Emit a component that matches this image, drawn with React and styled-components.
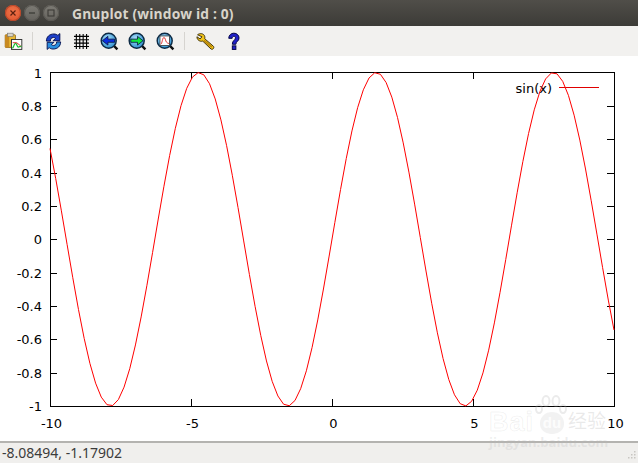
import React from "react";
import styled, { createGlobalStyle } from "styled-components";

const Global = createGlobalStyle`
  html, body { margin: 0; padding: 0; background: #fff; overflow: hidden; }
  #root { width: 638px; height: 463px; }
`;
const Win = styled.div`
  width: 638px; height: 463px; display: flex; flex-direction: column; position: relative; overflow: hidden;
  font-family: "Noto Sans", sans-serif;
`;
const TitleBar = styled.div`
  height: 26px; flex: none; display: flex; align-items: center; padding-left: 5px;
  background: linear-gradient(#504e49, #3c3b37);
`;
const WinBtn = styled.div`
  width: 16px; height: 16px; border-radius: 50%; margin-right: 3px; display: flex; align-items: center; justify-content: center;
  background: ${p => p.$close ? "radial-gradient(circle at 50% 40%, #f0744a, #d9502a)" : "linear-gradient(#7d7b75, #64625d)"};
  box-shadow: inset 0 0 0 1px ${p => p.$close ? "#b8472a" : "#5a5853"};
`;
const Title = styled.div`
  margin-left: 10px; color: #d8d4ca; font: bold 13.8px "Open Sans", sans-serif; letter-spacing: 0.15px; white-space: nowrap;
`;
const Toolbar = styled.div`
  height: 30px; flex: none; display: flex; align-items: center; padding-left: 2px; background: #f2f1ef;
`;
const ToolBtn = styled.div`
  width: 28px; height: 30px; flex: none; display: flex; align-items: center; justify-content: center;
  &:first-child { width: 22px; }
`;
const Sep = styled.div`
  width: 1px; height: 18px; background: #d6d4d0; margin: 0 ${p => p.$r || 6}px 0 ${p => p.$l || 8}px; flex: none;
`;
const PlotArea = styled.div`
  height: 385px; flex: none; background: #fff; position: relative;
`;
const PlotSvg = styled.svg`
  display: block; width: 638px; height: 385px;
`;
const Status = styled.div`
  flex: 1; background: #f0efed; border-top: 2px solid #b4b3b0; position: relative; padding: 1px 0 0 2px;
  color: #3c3c3c; font: 14px/18px "Noto Sans", sans-serif; box-sizing: border-box;
`;
const Grip = styled.svg`
  position: absolute; right: 2px; bottom: 2px; width: 11px; height: 11px;
`;
const Mark = styled.div`
  position: absolute; left: 486px; top: 395px; width: 150px; height: 60px; pointer-events: none;
`;
const MarkBai = styled.span`
  position: absolute; left: 3px; top: 17px; font: bold 27px/20px "Liberation Sans", sans-serif; letter-spacing: 1px;
  -webkit-text-stroke: 0.6px rgba(170,170,170,.22); color: rgba(255,255,255,.6);
`;
const MarkDu = styled.span`
  position: absolute; left: 54px; top: 17px; width: 24px; height: 22px; border-radius: 50% 50% 45% 45%;
  background: rgba(190,190,190,.2); text-align: center;
  font: bold 15px/22px "Liberation Sans", sans-serif; color: rgba(255,255,255,.85);
`;
const MarkCn = styled.span`
  position: absolute; left: 82px; top: 15px; font: 19px/20px "Noto Sans CJK SC", sans-serif; color: rgba(170,170,170,.25);
`;
const MarkUrl = styled.span`
  position: absolute; left: 3px; top: 41px; font: bold 13px/13px "Open Sans", sans-serif; color: rgba(185,185,185,.25); white-space: nowrap;
`;
const MarkPaw = styled.svg`
  position: absolute; left: 46px; top: 0; width: 36px; height: 22px;
`;

const L = 50, R = 614, T = 72.5, B = 406;
const px = x => L + (x + 10) / 20 * (R - L);
const py = y => (T + B) / 2 - y * (B - T) / 2;
const curve = Array.from({ length: 100 }, (_, i) => {
  const x = -10 + i * 20 / 99;
  return `${px(x).toFixed(2)},${py(Math.sin(x)).toFixed(2)}`;
}).join(" ");
const yt = ["1", "0.8", "0.6", "0.4", "0.2", "0", "-0.2", "-0.4", "-0.6", "-0.8", "-1"];
const xt = [-10, -5, 0, 5, 10];

const Icon = styled.svg`width: 19px; height: 19px; display: block;`;

const Lens = ({ children }) => (
  <Icon viewBox="0 0 24 24">
    <defs>
      <radialGradient id="lg" cx="40%" cy="35%" r="70%">
        <stop offset="0" stopColor="#a8dcf8" />
        <stop offset="1" stopColor="#2a8fd0" />
      </radialGradient>
    </defs>
    <path d="M17 17l5 5" stroke="#111" strokeWidth="3" />
    <circle cx="11" cy="11" r="9.500" fill="url(#lg)" stroke="#0d2a44" strokeWidth="1.800" />
    {children}
  </Icon>
);
const ArrowPath = ({ d, fill }) => <path d={d} fill={fill} stroke="#06103a" strokeWidth="1" />;

export default function App() {
  return (
    <Win>
      <Global />
      <TitleBar>
        <WinBtn $close>
          <svg width="8" height="8" viewBox="0 0 8 8"><path d="M1.5 1.5l5 5M6.5 1.5l-5 5" stroke="#5a2010" strokeWidth="1.2" /></svg>
        </WinBtn>
        <WinBtn>
          <svg width="8" height="8" viewBox="0 0 8 8"><path d="M1 4h6" stroke="#3c3b37" strokeWidth="1.3" /></svg>
        </WinBtn>
        <WinBtn>
          <svg width="8" height="8" viewBox="0 0 8 8"><rect x="1" y="1" width="6" height="6" fill="none" stroke="#3c3b37" strokeWidth="1.1" /></svg>
        </WinBtn>
        <Title>Gnuplot (window id : 0)</Title>
      </TitleBar>
      <Toolbar>
        <ToolBtn>
          <Icon viewBox="0 0 24 24">
            <rect x="1.500" y="3.500" width="13" height="16" rx="1" fill="#e8b834" stroke="#8a6414" />
            <rect x="1.500" y="3.500" width="5" height="16" fill="#c98a20" />
            <rect x="4.500" y="1.500" width="7" height="4" fill="#d9d5c8" stroke="#777" strokeWidth=".8" />
            <rect x="9.500" y="9.500" width="13" height="12.500" fill="#fff" stroke="#333" strokeWidth="1.200" />
            <path d="M10.500 20.500c2-1 2-6 4-6s2 4.500 3.500 4.500 2-1 4-1" fill="none" stroke="#18c030" strokeWidth="1.600" />
            <path d="M11 13.500h5l5 4" fill="none" stroke="#e03030" strokeWidth="1.200" />
          </Icon>
        </ToolBtn>
        <Sep />
        <ToolBtn>
          <Icon viewBox="0 0 24 24">
            <path d="M3 11.500C3 6 7 2.500 12.500 2.500c2.300 0 3.800.8 5 1.800L20 2v9h-8.500l3-3C13.500 7 12.500 6.800 11.500 7c-2.500.3-3.500 2.300-3.500 4.500z" fill="#1d3fc8" stroke="#041050" strokeWidth="1.200" />
            <path d="M21 12.500c0 5.500-4 9-9.500 9-2.300 0-3.800-.8-5-1.800L4 22v-9h8.500l-3 3c1 1 2 1.200 3 1 2.500-.3 3.500-2.300 3.500-4.500z" fill="#2a8fe0" stroke="#041050" strokeWidth="1.200" />
          </Icon>
        </ToolBtn>
        <ToolBtn>
          <Icon viewBox="0 0 24 24">
            <path d="M2.500 5.500h19M2.500 9.800h19M2.500 14.100h19M2.500 18.400h19M5.500 2.500v19M9.800 2.500v19M14.100 2.500v19M18.400 2.500v19" stroke="#000" strokeWidth="1.400" fill="none" />
          </Icon>
        </ToolBtn>
        <ToolBtn>
          <Lens><ArrowPath d="M3 11l7-5.500V9h8.500v4H10v3.500z" fill="#0a2ee0" /></Lens>
        </ToolBtn>
        <ToolBtn>
          <Lens><ArrowPath d="M19 11l-7-5.500V9H3.500v4H12v3.500z" fill="#10e840" /></Lens>
        </ToolBtn>
        <ToolBtn>
          <Lens>
            <rect x="5" y="5" width="12" height="12" fill="#fff" stroke="#333" strokeWidth="1" />
            <path d="M6 15.500c2-1 2-8.500 4-8.500s2 4.500 3 5.500 2 2 3.500 2" fill="none" stroke="#e02828" strokeWidth="1.200" />
          </Lens>
        </ToolBtn>
        <Sep $l={5} $r={6} />
        <ToolBtn>
          <Icon viewBox="0 0 24 24">
            <path d="M2 3.500C5 1 10 1.800 11 5.500c.4 1.300.2 2.300 0 3l11 9.500c1.500 1.500-.5 5-3 3.500L8.500 11.500C5 12.500 1 10 1.200 6l4 2.800L7.500 6z" fill="#f2c418" stroke="#3a2c06" strokeWidth="1.200" />
            <path d="M10 10.500l10 8.500" stroke="#b8860c" strokeWidth="2" />
          </Icon>
        </ToolBtn>
        <ToolBtn>
          <Icon viewBox="0 0 24 24">
            <path d="M6 8C6 4 9 1.500 12.500 1.500S19 4 19 7.500c0 4.200-4 4.300-4 8h-4.500c0-5 4-5.300 4-8 0-1.200-.8-2-2-2-1.400 0-2.200 1-2.200 2.500z" fill="#2020c8" stroke="#000040" strokeWidth="1.200" />
            <rect x="10.500" y="17.500" width="4.500" height="4.500" fill="#2020c8" stroke="#000040" strokeWidth="1.200" />
          </Icon>
        </ToolBtn>
      </Toolbar>
      <PlotArea>
        <PlotSvg viewBox="0 56 638 385">
          <g stroke="#000" strokeWidth="1" fill="none" shapeRendering="crispEdges">
            <rect x={L} y={Math.floor(T)} width={R - L} height={B - Math.floor(T)} />
            {yt.slice(1, -1).map((t, i) => {
              const y = Math.round(py(parseFloat(t)));
              return <path key={i} d={`M${L} ${y}h7M${R} ${y}h-7`} />;
            })}
            {xt.slice(1, -1).map(t => (
              <path key={t} d={`M${Math.round(px(t))} ${B}v-7M${Math.round(px(t))} ${Math.floor(T)}v7`} />
            ))}
          </g>
          <g fontFamily="'DejaVu Sans', sans-serif" fontSize="13" fill="#000">
            {yt.map(t => (
              <text key={t} x="42" y={py(parseFloat(t)) + 5} textAnchor="end">{t}</text>
            ))}
            {xt.map(t => (
              <text key={t} x={px(t) + 1.5} y="428" textAnchor="middle">{t}</text>
            ))}
            <text x="552" y="92.500" textAnchor="end">sin(x)</text>
          </g>
          <path d="M559 87.500h40" stroke="#e00000" strokeWidth="1" shapeRendering="crispEdges" />
          <polyline points={curve} fill="none" stroke="#ff0000" strokeWidth="1" />
        </PlotSvg>
      </PlotArea>
      <Status>
        -8.08494, -1.17902
        <Grip viewBox="0 0 11 11">
          <g fill="#c8c6c2">
            <rect x="9" y="1" width="1.500" height="1.500" />
            <rect x="6" y="4" width="1.500" height="1.500" /><rect x="9" y="4" width="1.500" height="1.500" />
            <rect x="3" y="7" width="1.500" height="1.500" /><rect x="6" y="7" width="1.500" height="1.500" /><rect x="9" y="7" width="1.500" height="1.500" />
          </g>
        </Grip>
      </Status>
      <Mark>
        <MarkPaw viewBox="0 0 36 22">
          <g fill="none" stroke="rgba(175,175,175,.25)" strokeWidth="2">
            <ellipse cx="7" cy="14" rx="3" ry="4" /><ellipse cx="14" cy="6" rx="3.500" ry="5" />
            <ellipse cx="24" cy="6" rx="3.500" ry="5" /><ellipse cx="31" cy="14" rx="3" ry="4" />
          </g>
        </MarkPaw>
        <MarkBai>Bai</MarkBai>
        <MarkDu>du</MarkDu>
        <MarkCn>经验</MarkCn>
        <MarkUrl>jingyan.baidu.com</MarkUrl>
      </Mark>
    </Win>
  );
}
